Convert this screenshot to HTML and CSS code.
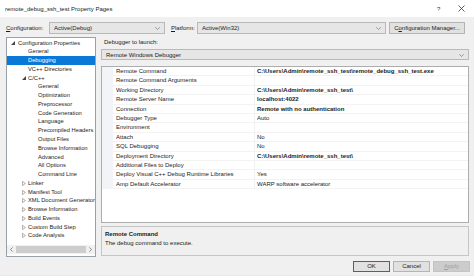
FILE: index.html
```html
<!DOCTYPE html>
<html lang="en">
<head>
    <meta charset="UTF-8">
    <title>remote_debug_ssh_test Property Pages</title>
    <link rel="stylesheet" href="styles.css">
</head>
<body>
<div class="dialog">
    <div class="titlebar">
        <span class="title">remote_debug_ssh_test Property Pages</span>
        <span class="help">?</span>
        <svg class="close" width="7" height="7" viewBox="0 0 7 7"><path d="M0.5 0.5L6.5 6.5M6.5 0.5L0.5 6.5" stroke="#333" stroke-width="0.8"/></svg>
    </div>

    <div class="config-row">
        <span class="lbl lbl-cfg"><u>C</u>onfiguration:</span>
        <div class="combo combo-cfg">Active(Debug)<svg class="chev" width="5" height="3" viewBox="0 0 5 3"><path d="M0.3 0.3L2.5 2.5L4.7 0.3" fill="none" stroke="#777" stroke-width="0.7"/></svg></div>
        <span class="lbl lbl-plat"><u>P</u>latform:</span>
        <div class="combo combo-plat">Active(Win32)<svg class="chev" width="5" height="3" viewBox="0 0 5 3"><path d="M0.3 0.3L2.5 2.5L4.7 0.3" fill="none" stroke="#777" stroke-width="0.7"/></svg></div>
        <div class="btn btn-mgr">C<u>o</u>nfiguration Manager...</div>
    </div>

    <div class="main">
        <div class="tree">
            <div class="tree-list">
                <div class="node lv0"><svg class="exp" width="4" height="4" viewBox="0 0 4 4"><path d="M4 0L4 4L0 4Z" fill="#444"/></svg>Configuration Properties</div>
                <div class="node lv1">General</div>
                <div class="node lv1 selected">Debugging</div>
                <div class="node lv1">VC++ Directories</div>
                <div class="node lv1"><svg class="exp" width="4" height="4" viewBox="0 0 4 4"><path d="M4 0L4 4L0 4Z" fill="#444"/></svg>C/C++</div>
                <div class="node lv2">General</div>
                <div class="node lv2">Optimization</div>
                <div class="node lv2">Preprocessor</div>
                <div class="node lv2">Code Generation</div>
                <div class="node lv2">Language</div>
                <div class="node lv2">Precompiled Headers</div>
                <div class="node lv2">Output Files</div>
                <div class="node lv2">Browse Information</div>
                <div class="node lv2">Advanced</div>
                <div class="node lv2">All Options</div>
                <div class="node lv2">Command Line</div>
                <div class="node lv1"><svg class="col" width="4" height="5" viewBox="0 0 4 5"><path d="M0.4 0.4L3.4 2.5L0.4 4.6Z" fill="none" stroke="#777" stroke-width="0.6"/></svg>Linker</div>
                <div class="node lv1"><svg class="col" width="4" height="5" viewBox="0 0 4 5"><path d="M0.4 0.4L3.4 2.5L0.4 4.6Z" fill="none" stroke="#777" stroke-width="0.6"/></svg>Manifest Tool</div>
                <div class="node lv1"><svg class="col" width="4" height="5" viewBox="0 0 4 5"><path d="M0.4 0.4L3.4 2.5L0.4 4.6Z" fill="none" stroke="#777" stroke-width="0.6"/></svg>XML Document Generator</div>
                <div class="node lv1"><svg class="col" width="4" height="5" viewBox="0 0 4 5"><path d="M0.4 0.4L3.4 2.5L0.4 4.6Z" fill="none" stroke="#777" stroke-width="0.6"/></svg>Browse Information</div>
                <div class="node lv1"><svg class="col" width="4" height="5" viewBox="0 0 4 5"><path d="M0.4 0.4L3.4 2.5L0.4 4.6Z" fill="none" stroke="#777" stroke-width="0.6"/></svg>Build Events</div>
                <div class="node lv1"><svg class="col" width="4" height="5" viewBox="0 0 4 5"><path d="M0.4 0.4L3.4 2.5L0.4 4.6Z" fill="none" stroke="#777" stroke-width="0.6"/></svg>Custom Build Step</div>
                <div class="node lv1"><svg class="col" width="4" height="5" viewBox="0 0 4 5"><path d="M0.4 0.4L3.4 2.5L0.4 4.6Z" fill="none" stroke="#777" stroke-width="0.6"/></svg>Code Analysis</div>
            </div>
            <div class="hscroll">
                <svg class="arrow" width="3" height="5" viewBox="0 0 3 5"><path d="M2.6 0.4L0.5 2.5L2.6 4.6" fill="none" stroke="#606060" stroke-width="0.7"/></svg>
                <div class="thumb"></div>
                <svg class="arrow" width="3" height="5" viewBox="0 0 3 5"><path d="M0.4 0.4L2.5 2.5L0.4 4.6" fill="none" stroke="#606060" stroke-width="0.7"/></svg>
            </div>
        </div>

        <div class="right">
            <div class="launch-lbl">Debugger to launch:</div>
            <div class="combo combo-launch">Remote Windows Debugger<svg class="chev" width="5" height="3" viewBox="0 0 5 3"><path d="M0.3 0.3L2.5 2.5L4.7 0.3" fill="none" stroke="#777" stroke-width="0.7"/></svg></div>

            <div class="grid">
                <div class="prop"><span class="gut"></span><span class="pname">Remote Command</span><span class="pval bold">C:\Users\Admin\remote_ssh_test\remote_debug_ssh_test.exe</span></div>
                <div class="prop"><span class="gut"></span><span class="pname">Remote Command Arguments</span><span class="pval"></span></div>
                <div class="prop"><span class="gut"></span><span class="pname">Working Directory</span><span class="pval bold">C:\Users\Admin\remote_ssh_test\</span></div>
                <div class="prop"><span class="gut"></span><span class="pname">Remote Server Name</span><span class="pval bold">localhost:4022</span></div>
                <div class="prop"><span class="gut"></span><span class="pname">Connection</span><span class="pval bold">Remote with no authentication</span></div>
                <div class="prop"><span class="gut"></span><span class="pname">Debugger Type</span><span class="pval">Auto</span></div>
                <div class="prop"><span class="gut"></span><span class="pname">Environment</span><span class="pval"></span></div>
                <div class="prop"><span class="gut"></span><span class="pname">Attach</span><span class="pval">No</span></div>
                <div class="prop"><span class="gut"></span><span class="pname">SQL Debugging</span><span class="pval">No</span></div>
                <div class="prop"><span class="gut"></span><span class="pname">Deployment Directory</span><span class="pval bold">C:\Users\Admin\remote_ssh_test\</span></div>
                <div class="prop"><span class="gut"></span><span class="pname">Additional Files to Deploy</span><span class="pval"></span></div>
                <div class="prop"><span class="gut"></span><span class="pname">Deploy Visual C++ Debug Runtime Libraries</span><span class="pval">Yes</span></div>
                <div class="prop"><span class="gut"></span><span class="pname">Amp Default Accelerator</span><span class="pval">WARP software accelerator</span></div>
            </div>

            <div class="desc">
                <div class="desc-title">Remote Command</div>
                <div class="desc-text">The debug command to execute.</div>
            </div>
        </div>
    </div>

    <div class="buttons">
        <div class="btn btn-ok">OK</div>
        <div class="btn">Cancel</div>
        <div class="btn disabled"><u>A</u>pply</div>
    </div>
</div>
</body>
</html>
```

FILE: styles.css
```css
body {
    margin: 0;
    font-family: "Liberation Sans", Arial, sans-serif;
    font-size: 6px;
    color: #1b1b1b;
    background-color: #f0f0f0;
}
.dialog {
    width: 474px;
    height: 276px;
    background-color: #f0f0f0;
    border-bottom: 1px solid #f3ead6;
    box-sizing: border-box;
}
u {
    text-decoration: underline;
    text-underline-offset: 1px;
}

/* title bar */
.titlebar {
    height: 17px;
    background-color: #fff;
    display: flex;
    align-items: center;
    padding-left: 5px;
}
.title {
    flex: 1;
}
.help {
    width: 8px;
    margin-right: 13px;
    color: #333;
}
.close {
    margin-right: 9px;
}

/* configuration row */
.config-row {
    display: flex;
    align-items: center;
    height: 12px;
    margin-top: 5px;
    padding-left: 6px;
}
.lbl-cfg {
    width: 43px;
}
.lbl-plat {
    width: 26px;
    margin-left: 6px;
}
.combo {
    position: relative;
    height: 12px;
    line-height: 11px;
    box-sizing: border-box;
    border: 1px solid #b9b9b9;
    background-color: #e6e6e6;
    padding-left: 4px;
}
.chev {
    position: absolute;
    right: 4px;
    top: 4px;
}
.combo-cfg {
    width: 116px;
}
.combo-plat {
    width: 189px;
}
.btn {
    height: 11px;
    line-height: 9px;
    box-sizing: border-box;
    border: 1px solid #b4b4b4;
    background-color: #e1e1e1;
    text-align: center;
    width: 37px;
}
.btn-mgr {
    width: 76px;
    height: 12px;
    line-height: 10px;
    margin-left: 3px;
}

/* main area */
.main {
    display: flex;
    margin-top: 3px;
    padding-left: 6px;
}
.tree {
    width: 90px;
    height: 220px;
    box-sizing: border-box;
    border: 1px solid #9aa0a8;
    background-color: #fff;
    display: flex;
    flex-direction: column;
    overflow: hidden;
}
.tree-list {
    padding-top: 0.6px;
    font-size: 5.75px;
}
.node {
    position: relative;
    height: 8.77px;
    line-height: 8.77px;
    white-space: nowrap;
}
.lv0 { padding-left: 11px; }
.lv1 { padding-left: 21px; }
.lv2 { padding-left: 31px; }
.node svg {
    position: absolute;
    top: 2.5px;
}
.lv0 svg { left: 4px; }
.lv1 svg { left: 15px; }
.node .col { top: 2px; }
.selected {
    background-color: #0a78d7;
    color: #fff;
}
.hscroll {
    margin-top: auto;
    height: 9px;
    margin-bottom: 2px;
    display: flex;
    align-items: center;
    background-color: #f0f0f0;
}
.arrow {
    margin: 0 3px;
}
.thumb {
    flex: 1;
    height: 7px;
    background-color: #cdcdcd;
}

.right {
    margin-left: 5px;
    width: 368px;
}
.launch-lbl {
    height: 12px;
    line-height: 10px;
    padding-left: 3px;
}
.combo-launch {
    height: 11px;
    line-height: 10px;
}
.combo-launch .chev {
    top: 3.5px;
}

/* property grid */
.grid {
    margin-top: 6px;
    height: 157px;
    box-sizing: border-box;
    border: 1px solid #adadad;
    background-color: #fff;
}
.prop {
    display: flex;
    height: 9.4px;
    line-height: 9.4px;
    white-space: nowrap;
}
.gut {
    width: 11px;
    background-color: #f2f4f7;
}
.pname {
    width: 142px;
    padding-left: 3px;
    border-right: 1px solid #f0f0f0;
    border-bottom: 1px solid #f3f3f3;
    box-sizing: border-box;
    height: 9.4px;
}
.pval {
    flex: 1;
    padding-left: 2px;
    border-bottom: 1px solid #f3f3f3;
    box-sizing: border-box;
    height: 9.4px;
}
.bold {
    font-weight: bold;
}

/* description */
.desc {
    margin-top: 3px;
    height: 30px;
    box-sizing: border-box;
    border: 1px solid #c6c6c6;
    padding: 3px 0 0 3px;
    line-height: 9px;
}
.desc-title {
    font-weight: bold;
}

/* dialog buttons */
.buttons {
    display: flex;
    justify-content: flex-end;
    gap: 3px;
    margin-top: 4px;
    padding-right: 4px;
}
.btn-ok {
    border-color: #0078d7;
}
.disabled {
    background-color: #cccccc;
    border-color: #c4c4c4;
    color: #a0a0a0;
}
```
